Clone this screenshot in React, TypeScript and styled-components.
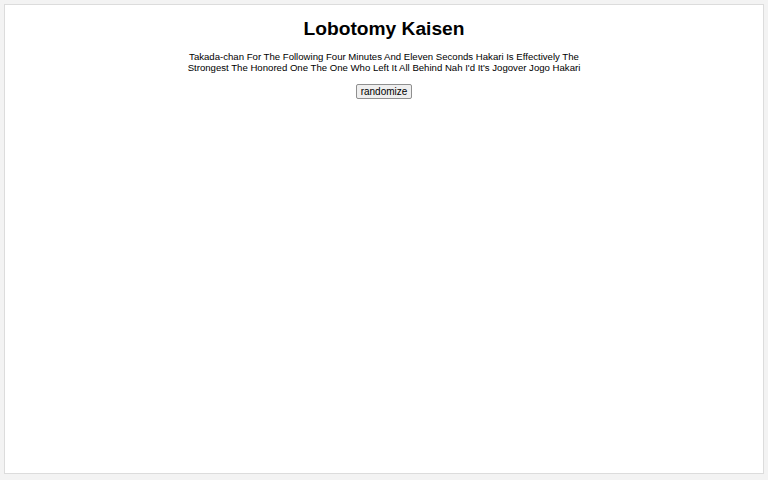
import { useState } from "react";
import styled, { createGlobalStyle } from "styled-components";

const GlobalStyle = createGlobalStyle`
    html, body {
        margin:0;
        padding:0;
        background:#f3f3f3;
        font-family:"Liberation Sans", Arial, sans-serif;
    }
`

const phrases = [
    "Takada-chan", "For The Following Four Minutes And Eleven Seconds Hakari Is Effectively The Strongest",
    "The Honored One", "The One Who Left It All Behind", "Nah I'd", "It's Jogover", "Jogo", "Hakari",
]

const Page = styled.main`
    margin:4px;
    height:470px;
    box-sizing:border-box;
    background:#fff;
    border:1px solid #dcdcdc;
    display:flex;
    flex-direction:column;
    align-items:center;
    padding-top:14px;
`

const Title = styled.h1`
    margin:0;
    font-size:19.2px;
    font-weight:bold;
    color:#000;
    line-height:20px;
`

const Blurb = styled.p`
    margin:12px 0 0;
    width:400px;
    text-align:center;
    font-size:9.6px;
    line-height:11px;
    color:#000;
`

const Button = styled.button`
    margin-top:11px;
    box-sizing:border-box;
    height:15px;
    font-family:"Liberation Sans", Arial, sans-serif;
    font-size:10px;
    line-height:12px;
    padding:0 4px;
    background:#efefef;
    color:#000;
    border:1px solid #8f8f8f;
    border-radius:2px;
`

export default function App(){
    const [text, setText] = useState(phrases.join(" "))

    const randomize = ()=>{
        const shuffled = [...phrases].sort(()=>Math.random() - 0.5)
        setText(shuffled.join(" "))
    }

    return (
        <>
            <GlobalStyle />
            <Page>
                <Title>Lobotomy Kaisen</Title>
                <Blurb>{text}</Blurb>
                <Button onClick={randomize}>randomize</Button>
            </Page>
        </>
    )
}
